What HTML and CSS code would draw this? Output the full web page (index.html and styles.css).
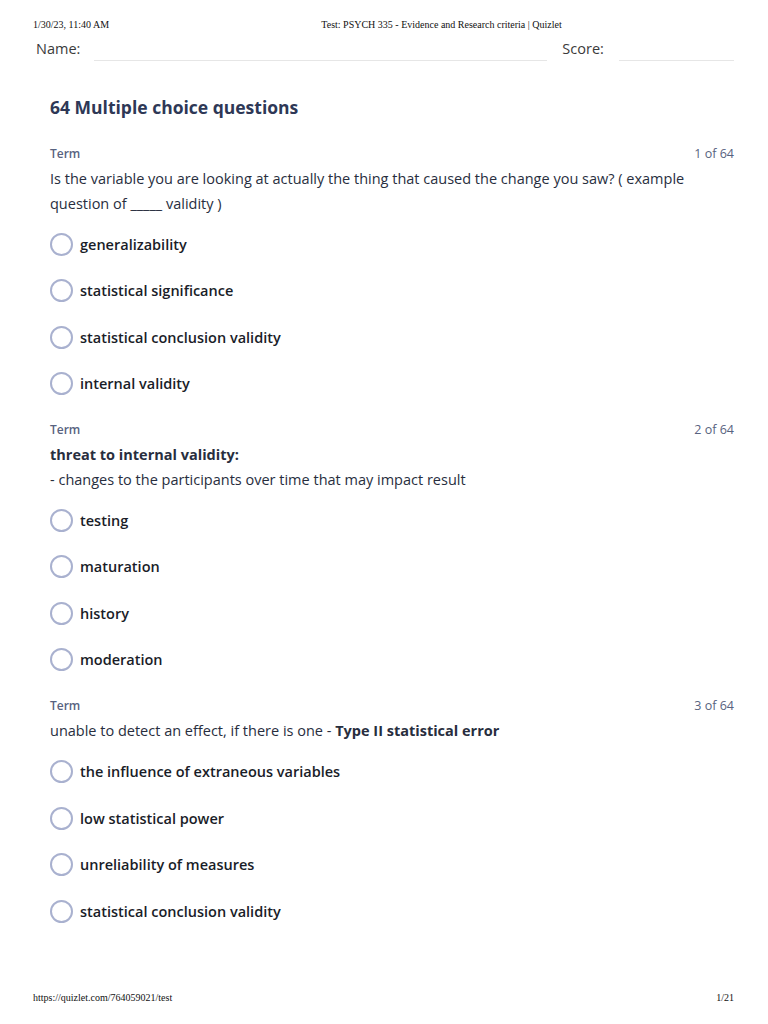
FILE: index.html
```html
<!DOCTYPE html>
<html lang="en">
<head>
  <meta charset="UTF-8" />
  <title>Test: PSYCH 335 - Evidence and Research criteria | Quizlet</title>
  <link rel="stylesheet" href="styles.css">
</head>
<body>
  <div class="print-head">
    <span>1/30/23, 11:40 AM</span>
    <span class="print-title">Test: PSYCH 335 - Evidence and Research criteria | Quizlet</span>
    <span></span>
  </div>

  <div class="name-row">
    <span class="label">Name:</span>
    <span class="line name-line"></span>
    <span class="label">Score:</span>
    <span class="line score-line"></span>
  </div>

  <div class="test">
    <h1>64 Multiple choice questions</h1>

    <div class="question">
      <div class="term-row"><span class="term">Term</span><span class="count">1 of 64</span></div>
      <p class="prompt">Is the variable you are looking at actually the thing that caused the change you saw? ( example question of _____ validity )</p>
      <ul class="options">
        <li><span class="radio"></span>generalizability</li>
        <li><span class="radio"></span>statistical significance</li>
        <li><span class="radio"></span>statistical conclusion validity</li>
        <li><span class="radio"></span>internal validity</li>
      </ul>
    </div>

    <div class="question">
      <div class="term-row"><span class="term">Term</span><span class="count">2 of 64</span></div>
      <p class="prompt"><b>threat to internal validity:</b><br>- changes to the participants over time that may impact result</p>
      <ul class="options">
        <li><span class="radio"></span>testing</li>
        <li><span class="radio"></span>maturation</li>
        <li><span class="radio"></span>history</li>
        <li><span class="radio"></span>moderation</li>
      </ul>
    </div>

    <div class="question">
      <div class="term-row"><span class="term">Term</span><span class="count">3 of 64</span></div>
      <p class="prompt">unable to detect an effect, if there is one - <b>Type II statistical error</b></p>
      <ul class="options">
        <li><span class="radio"></span>the influence of extraneous variables</li>
        <li><span class="radio"></span>low statistical power</li>
        <li><span class="radio"></span>unreliability of measures</li>
        <li><span class="radio"></span>statistical conclusion validity</li>
      </ul>
    </div>
  </div>

  <div class="print-foot">
    <span>https://quizlet.com/764059021/test</span>
    <span>1/21</span>
  </div>
</body>
</html>
```

FILE: styles.css
```css
body {
  margin: 0;
  width: 768px;
  height: 1024px;
  position: relative;
  background: #fff;
  color: #282e3e;
  font-family: "Open Sans", Lato, sans-serif;
}

.print-head, .print-foot {
  display: flex;
  justify-content: space-between;
  font-family: "Liberation Serif", serif;
  font-size: 10px;
  color: #111;
  padding: 0 34px 0 33px;
}

.print-head {
  padding-top: 18px;
  height: 14px;
  line-height: 14px;
}

.print-title {
  margin-left: 40px;
}

.print-foot {
  position: absolute;
  left: 0;
  right: 0;
  top: 991px;
  line-height: 14px;
}

.name-row {
  display: flex;
  align-items: flex-end;
  margin: 7px 34px 0 36px;
  height: 22px;
}

.label {
  font-size: 14.5px;
  color: #3a3a3a;
  line-height: 20px;
  padding-bottom: 2px;
}

.line {
  border-bottom: 1px solid #e6e6e6;
  height: 1px;
}

.name-line {
  width: 453px;
  margin: 0 15px 0 14px;
}

.score-line {
  flex: 1;
  margin-left: 15px;
}

.test {
  padding: 0 34px 0 50px;
}

h1 {
  margin: 33px 0 0;
  font-size: 17.5px;
  line-height: 26px;
  font-weight: 700;
  color: #2e3856;
}

.question {
  margin-top: 12px;
}

.test h1 + .question {
  margin-top: 23px;
}

.term-row {
  display: flex;
  justify-content: space-between;
  line-height: 22px;
  height: 22px;
  font-size: 12px;
}

.term {
  color: #586380;
  font-weight: 600;
}

.count {
  color: #586380;
  font-size: 12.5px;
}

.prompt {
  margin: 2px 0 0;
  font-size: 14.5px;
  line-height: 24.5px;
}

.prompt b {
  font-weight: 700;
}

.options {
  list-style: none;
  margin: 5px 0 0;
  padding: 0;
}

.options li {
  display: flex;
  align-items: center;
  height: 46.5px;
  font-size: 14.5px;
  font-weight: 600;
  color: #1a1d28;
}

.radio {
  width: 19px;
  height: 19px;
  border: 2px solid #a9b1cf;
  border-radius: 50%;
  margin-right: 7px;
  flex-shrink: 0;
}
```
